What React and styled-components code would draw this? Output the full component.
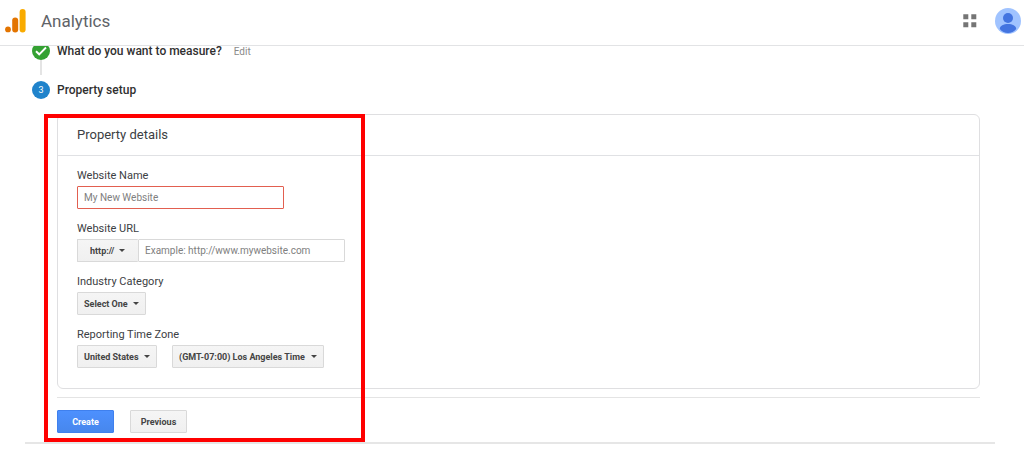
import { useState } from "react";
import styled, { createGlobalStyle } from "styled-components";

const GlobalStyle = createGlobalStyle`
  * {
    box-sizing: border-box;
  }

  body {
    margin: 0;
    background-color: white;
    color: #3c4043;
    font-family: Roboto, "Liberation Sans", sans-serif;
    font-size: 12px;
  }
`;

const Header = styled.header`
  position: sticky;
  top: 0;
  z-index: 10;
  display: flex;
  align-items: center;
  height: 46px;
  padding: 0 3px 4px 5px;
  background-color: white;
  border-bottom: 1px solid #e2e3e5;
`;

const Title = styled.h1`
  flex: 1;
  margin: 0 0 0 15px;
  color: #5f6368;
  font-size: 17px;
  font-weight: 400;
  line-height: 24px;
`;

const IconButton = styled.button`
  display: flex;
  padding: 0;
  margin-left: 18px;
  background: none;
  border: 0;
  cursor: pointer;
`;

const Main = styled.main`
  position: relative;
  margin: -4px 29px 0 25px;
  padding: 0 15px 9px 7px;
  border-bottom: 2px solid #e6e6e6;
`;

const Step = styled.div`
  display: flex;
  align-items: center;
  height: 18px;
`;

const StepCircle = styled.span`
  display: flex;
  justify-content: center;
  align-items: center;
  width: 18px;
  height: 18px;
  margin-right: 7px;
  border-radius: 50%;
  background-color: ${(props) => (props.$done ? "#34a132" : "#2083cb")};
  color: white;
  font-size: 9px;
`;

const StepName = styled.h2`
  margin: 0;
  color: #303030;
  font-size: 12px;
  font-weight: 500;
`;

const StepEdit = styled.a`
  margin-left: 12px;
  color: #8a8a8a;
  font-size: 10px;
  text-decoration: none;
`;

const StepLine = styled.div`
  width: 2px;
  height: 15px;
  margin: 0 0 6px 8px;
  background-color: #e4e4e4;
`;

const StepBody = styled.form`
  margin: 15px 0 0 25px;
`;

const Card = styled.section`
  border: 1px solid #dfdfe1;
  border-radius: 6px;
`;

const CardTitle = styled.h3`
  margin: 0;
  padding: 10px 19px;
  border-bottom: 1px solid #e0e1e4;
  font-size: 13px;
  font-weight: 400;
  line-height: 20px;
`;

const Fields = styled.div`
  display: flex;
  flex-direction: column;
  gap: 10px;
  padding: 10px 19px 20px;
`;

const Label = styled.label`
  display: block;
  font-size: 11px;
  line-height: 20px;
`;

const Controls = styled.div`
  display: flex;
  gap: ${(props) => props.$gap || 0}px;
`;

const TextInput = styled.input`
  width: 207px;
  height: 23px;
  padding: 0 6px;
  border: 1px solid ${(props) => (props.$invalid ? "#e25f50" : "#d9d9d9")};
  border-radius: 1px;
  background-color: white;
  color: #444;
  font-family: inherit;
  font-size: 10px;
  outline: none;

  &::placeholder {
    color: #808080;
    opacity: 1;
  }
`;

const SelectWrapper = styled.span`
  position: relative;
  display: inline-flex;
`;

const StyledSelect = styled.select`
  height: 23px;
  padding: 0 ${(props) => (props.$wide ? "23px 0 12px" : "17px 0 6px")};
  border: 1px solid #d9d9d9;
  border-right-width: ${(props) => (props.$wide ? 0 : 1)}px;
  border-radius: 1px;
  background: linear-gradient(#f5f5f5, #f0f0f0);
  color: #444;
  font-family: inherit;
  font-size: 9px;
  font-weight: 700;
  appearance: none;
  cursor: pointer;
`;

const Caret = styled.svg`
  position: absolute;
  top: 10px;
  right: ${(props) => (props.$wide ? 13 : 7)}px;
  pointer-events: none;
`;

const Actions = styled.div`
  display: flex;
  gap: 16px;
  margin-top: 8px;
  padding-top: 12px;
  border-top: 1px solid #e4e4e4;
`;

const Button = styled.button`
  width: 57px;
  height: 23px;
  padding: 0;
  border: 1px solid ${(props) => (props.$primary ? "#3f80ee" : "#d9d9d9")};
  border-radius: 1px;
  background: ${(props) =>
    props.$primary
      ? "linear-gradient(#4d90fe, #4787ed)"
      : "linear-gradient(#f5f5f5, #f0f0f0)"};
  color: ${(props) => (props.$primary ? "white" : "#444")};
  font-family: inherit;
  font-size: 9px;
  font-weight: 700;
  cursor: pointer;
`;

const Highlight = styled.div`
  position: absolute;
  top: 72px;
  bottom: 0;
  left: 19px;
  width: 321px;
  border: 4px solid #ff0000;
  pointer-events: none;
`;

const Select = ({ id, label, options, wide }) => {
  const [value, setValue] = useState(options[0]);

  return (
    <SelectWrapper>
      <StyledSelect
        id={id}
        aria-label={label}
        $wide={wide}
        value={value}
        onChange={(event) => setValue(event.target.value)}
      >
        {options.map((option) => (
          <option key={option}>{option}</option>
        ))}
      </StyledSelect>
      <Caret $wide={wide} width="6" height="3" viewBox="0 0 6 3">
        <path d="M0 0h6L3 3z" fill="#444" />
      </Caret>
    </SelectWrapper>
  );
};

const AnalyticsLogo = () => (
  <svg width="21" height="24" viewBox="0 0 21 24">
    <rect x="14.6" y="0" width="6" height="23.4" rx="3" fill="#f9ab00" />
    <rect x="7.2" y="8.6" width="6" height="14.8" rx="3" fill="#e37400" />
    <circle cx="3" cy="20.4" r="2.9" fill="#e37400" />
  </svg>
);

const App = () => {
  return (
    <>
      <GlobalStyle />
      <Header>
        <AnalyticsLogo />
        <Title>Analytics</Title>
        <IconButton aria-label="Apps">
          <svg width="14" height="14" viewBox="0 0 14 14" fill="#757575">
            <path d="M0.300 0.300h5v5h-5zM8.300 0.300h5v5h-5zM0.300 8.300h5v5h-5zM8.300 8.300h5v5h-5z" />
          </svg>
        </IconButton>
        <IconButton aria-label="Account">
          <svg width="26" height="26" viewBox="0 0 26 26">
            <circle cx="13" cy="13" r="13" fill="#a0c3ff" />
            <circle cx="13" cy="10" r="5" fill="#4374e0" />
            <path
              d="M4.8 21c0-3.200 4-4.900 8.200-4.900s8.200 1.700 8.200 4.900c-2 2.600-5 4-8.200 4s-6.200-1.400-8.200-4z"
              fill="#4374e0"
            />
          </svg>
        </IconButton>
      </Header>
      <Main>
        <Step>
          <StepCircle $done>
            <svg width="12" height="10" viewBox="0 0 12 10">
              <path
                d="M1 5.200l3.200 3.100L11 1.500"
                fill="none"
                stroke="white"
                strokeWidth="1.900"
              />
            </svg>
          </StepCircle>
          <StepName>What do you want to measure?</StepName>
          <StepEdit href="#edit">Edit</StepEdit>
        </Step>
        <StepLine />
        <Step>
          <StepCircle>3</StepCircle>
          <StepName>Property setup</StepName>
        </Step>
        <StepBody onSubmit={(event) => event.preventDefault()}>
          <Card>
            <CardTitle>Property details</CardTitle>
            <Fields>
              <div>
                <Label htmlFor="name">Website Name</Label>
                <Controls>
                  <TextInput id="name" placeholder="My New Website" $invalid />
                </Controls>
              </div>
              <div>
                <Label htmlFor="url">Website URL</Label>
                <Controls>
                  <Select label="Protocol" options={["http://"]} wide />
                  <TextInput
                    id="url"
                    placeholder="Example: http://www.mywebsite.com"
                  />
                </Controls>
              </div>
              <div>
                <Label htmlFor="category">Industry Category</Label>
                <Controls>
                  <Select id="category" options={["Select One"]} />
                </Controls>
              </div>
              <div>
                <Label htmlFor="country">Reporting Time Zone</Label>
                <Controls $gap={15}>
                  <Select id="country" options={["United States"]} />
                  <Select
                    label="Time zone"
                    options={["(GMT-07:00) Los Angeles Time"]}
                  />
                </Controls>
              </div>
            </Fields>
          </Card>
          <Actions>
            <Button type="submit" $primary>
              Create
            </Button>
            <Button type="button">Previous</Button>
          </Actions>
        </StepBody>
        <Highlight />
      </Main>
    </>
  );
};

export default App;
